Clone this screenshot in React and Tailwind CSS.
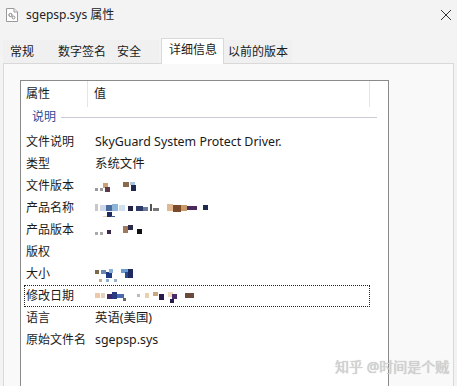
import React from 'react';

const FONT = { fontFamily: '"Noto Sans", "Noto Sans CJK SC", sans-serif' };

// pixel mosaic blocks: [x, y, w, h, color], relative to value start
const mosaics = {
  文件版本: [
    [0, 2, 3, 3, '#9a9a9a'], [5, 2, 3, 3, '#9a9a9a'], [8, -3, 5, 5, '#c9a27a'], [10, 1, 5, 5, '#5b3a4a'],
    [28, -4, 6, 5, '#8a6a4a'], [36, -1, 5, 6, '#1e2a50'], [35, -4, 5, 3, '#a9c4e0'],
  ],
  产品名称: [
    [0, -4, 3, 7, '#c8c8c8'], [5, -3, 6, 6, '#d0d8e8'], [11, -3, 6, 6, '#4a6ba0'], [17, -4, 6, 7, '#8fb4d8'],
    [24, -3, 6, 6, '#cfe1f0'], [33, -2, 5, 5, '#222244'], [41, -2, 7, 5, '#2b3a66'], [48, -1, 5, 4, '#6a7aa0'],
    [55, -4, 2, 7, '#555'], [58, 0, 6, 3, '#777'], [72, -4, 6, 7, '#e2b890'], [78, -3, 8, 7, '#7a4a2a'],
    [86, -3, 6, 6, '#c89868'], [92, -2, 10, 4, '#4a2a5a'], [108, -3, 5, 5, '#1e2a50'],
    [12, 4, 5, 5, '#1e2a60'], [16, 8, 4, 4, '#3a5a9a'], [8, 8, 4, 4, '#e8d0b0'],
  ],
  产品版本: [
    [0, 2, 3, 3, '#aaa'], [5, 2, 3, 3, '#aaa'], [12, 0, 4, 4, '#3a2a4a'], [28, -4, 5, 7, '#a07a5a'],
    [33, -5, 5, 5, '#2a2a4a'], [42, -1, 5, 5, '#111'],
  ],
  大小: [
    [0, -4, 4, 4, '#7a6a4a'], [6, -4, 5, 4, '#6a8ab0'], [11, -2, 6, 6, '#1e3a80'], [14, -5, 4, 4, '#8ab0d8'],
    [26, -5, 7, 4, '#6a9ad0'], [30, -2, 8, 6, '#2a4a90'], [33, -5, 5, 9, '#1e2a60'],
    [4, 5, 3, 3, '#c0b090'], [11, 5, 3, 3, '#8ab0d8'], [19, 5, 3, 3, '#9ab0c8'],
  ],
  修改日期: [
    [0, -3, 5, 5, '#f0c8a8'], [6, -3, 4, 5, '#e8d0c0'], [12, -2, 5, 5, '#3a2a6a'], [17, -4, 5, 7, '#2a3a80'],
    [22, -2, 7, 4, '#4a6ab0'], [28, 2, 3, 3, '#666'], [42, -2, 3, 3, '#bbb'], [50, -3, 4, 5, '#e8d0b0'],
    [58, -4, 5, 4, '#c8a880'], [64, -2, 5, 6, '#2a1a4a'], [73, -4, 5, 5, '#f0d8b8'], [77, -2, 5, 5, '#4a2a6a'],
    [75, 3, 4, 4, '#2a1a4a'], [90, -3, 9, 5, '#6a4a3a'],
  ],
};

function Mosaic({ name, width = 120 }) {
  return (
    <svg width={width} height="18" viewBox={`0 -9 ${width} 18`} className="block">
      {mosaics[name].map(([x, y, w, h, c], i) => (
        <rect key={i} x={x} y={y} width={w} height={h} fill={c} />
      ))}
    </svg>
  );
}

const rows = [
  { label: '文件说明', value: 'SkyGuard System Protect Driver.' },
  { label: '类型', value: '系统文件' },
  { label: '文件版本', mosaic: true },
  { label: '产品名称', mosaic: true },
  { label: '产品版本', mosaic: true },
  { label: '版权', value: '' },
  { label: '大小', mosaic: true },
  { label: '修改日期', mosaic: true, focus: true },
  { label: '语言', value: '英语(美国)' },
  { label: '原始文件名', value: 'sgepsp.sys' },
];

function FileIcon() {
  return (
    <svg width="12" height="14" viewBox="0 0 12 14">
      <path d="M0.5 0.5 H8 L11.5 4 V13.5 H0.5 Z" fill="#fff" stroke="#9a9a9a" />
      <path d="M8 0.5 V4 H11.5" fill="#eee" stroke="#9a9a9a" />
      <circle cx="4.5" cy="7" r="1.6" fill="none" stroke="#7a7a7a" />
      <circle cx="7.5" cy="9.5" r="1.4" fill="none" stroke="#8a8a8a" />
    </svg>
  );
}

const tabs = [
  { label: '常规', w: 'w-[45px]', pl: 'pl-[7px]' },
  { label: '数字签名', w: 'w-[64px]', pl: 'pl-[10px]' },
  { label: '安全', w: 'w-[47px]', pl: 'pl-[5px]' },
  { label: '详细信息', selected: true },
  { label: '以前的版本', w: 'w-[68px]', pl: 'pl-[4px]' },
];

export default function App() {
  return (
    <div
      className="relative w-[457px] h-[386px] overflow-hidden bg-[#f3f3f3] text-[12px] text-[#1a1a1a] flex flex-col"
      style={FONT}
    >
      {/* Title bar */}
      <div className="h-[30px] shrink-0 flex items-center">
        <div className="ml-[6px] w-[20px]">
          <FileIcon />
        </div>
        <span className="text-[12px] text-[#222]">sgepsp.sys 属性</span>
        <div className="ml-auto mr-[5px] w-[12px] h-[12px]">
          <svg width="12" height="12" viewBox="0 0 12 12">
            <path d="M1 1 L11 11 M11 1 L1 11" stroke="#333" strokeWidth="1" />
          </svg>
        </div>
      </div>

      {/* Tabs */}
      <div className="h-[33px] shrink-0 flex items-end pl-[3px] relative z-10">
        {tabs.map((t) =>
          t.selected ? (
            <div
              key={t.label}
              className="w-[63px] h-[26px] -mb-[1px] ml-[2px] pl-[7px] pt-[2px] bg-white border border-b-0 border-[#d9d9d9] flex items-start"
            >
              <span className="leading-[18px] text-[12px]">{t.label}</span>
            </div>
          ) : (
            <div
              key={t.label}
              className={`${t.w} ${t.pl} h-[23px] bg-[#f0f0f0] flex items-center`}
            >
              <span className="text-[12px]">{t.label}</span>
            </div>
          )
        )}
      </div>

      {/* Panel */}
      <div className="flex-1 ml-[3px] w-[451px] border border-b-0 border-[#d9d9d9] bg-[#f9f9f9] pt-[16px] pl-[16px]">
        <div className="w-[369px] h-full border border-b-0 border-[#8a8a8a] bg-white flex flex-col">
          {/* Header */}
          <div className="h-[26px] flex items-center shrink-0">
            <div className="w-[67px] h-full pl-[5px] flex items-center border-r border-[#e5e5e5]">属性</div>
            <div className="w-[282px] h-full pl-[6px] flex items-center border-r border-[#e5e5e5]">值</div>
          </div>
          {/* Group */}
          <div className="h-[24px] flex items-start pt-[2px] pl-[11px] shrink-0">
            <span className="text-[#2c4a95] leading-[16px]">说明</span>
            <div className="ml-[5px] mt-[8px] w-[316px] h-px bg-[#c8ccd4]" />
          </div>
          {/* Rows */}
          {rows.map((r) => (
            <div
              key={r.label}
              className={`h-[22px] ml-[3px] w-[346px] shrink-0 flex items-center border ${
                r.focus ? 'border-dotted border-[#222]' : 'border-transparent'
              }`}
            >
              <div className="w-[70px] pl-[1px] whitespace-nowrap">{r.label}</div>
              {r.mosaic ? (
                <Mosaic name={r.label} />
              ) : (
                <div className="whitespace-nowrap text-[12.4px]">{r.value}</div>
              )}
            </div>
          ))}
        </div>
      </div>

      {/* Watermark */}
      <div
        className="absolute left-[335px] top-[356px] text-[14px] text-[#d2d2d2]"
        style={{ textShadow: '0 0 1px #b0b0b0' }}
      >
        知乎 @时间是个贼
      </div>
    </div>
  );
}
